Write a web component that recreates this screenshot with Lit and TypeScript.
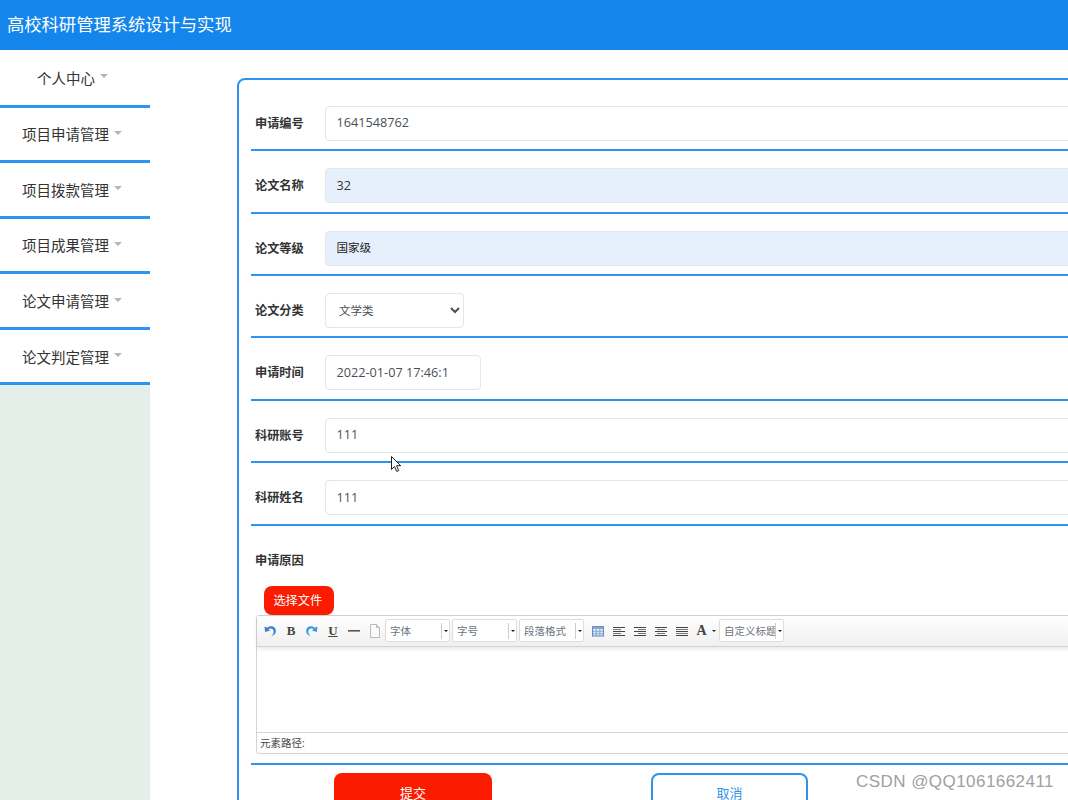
import { LitElement, html, css, svg, unsafeCSS } from "lit";
import { customElement } from "lit/decorators.js";

const FONT = unsafeCSS(`"Open Sans", "Noto Sans CJK SC", sans-serif`);
const menu = ["个人中心", "项目申请管理", "项目拨款管理", "项目成果管理", "论文申请管理", "论文判定管理"];

type Field = { label: string; value: string; kind?: "fill" | "date" | "select" | "small" };
const fields: Field[] = [
  { label: "申请编号", value: "1641548762" },
  { label: "论文名称", value: "32", kind: "fill" },
  { label: "论文等级", value: "国家级", kind: "small" },
  { label: "论文分类", value: "文学类", kind: "select" },
  { label: "申请时间", value: "2022-01-07 17:46:1", kind: "date" },
  { label: "科研账号", value: "111" },
  { label: "科研姓名", value: "111" },
];

const icon = (w: number, body: unknown) => html`<svg class="ico" width=${w} height="14" viewBox="0 0 ${w} 14">${body}</svg>`;
const undo = icon(14, svg`<path d="M1.500 2.500l.6 5.600 5.200-1.600-2-1.300C7.500 4 10 4.600 10.600 7c.4 2-.6 3.600-2.400 5 3-.6 5-2.800 4.600-5.800C12.300 2.600 8 1 4.300 3.800z" fill="#3b7fc4"/>`);
const redo = icon(14, svg`<path d="M12.500 2.500l-.6 5.600-5.200-1.600 2-1.300C6.500 4 4 4.600 3.400 7c-.4 2 .6 3.600 2.400 5-3-.6-5-2.800-4.600-5.800C1.700 2.600 6 1 9.700 3.800z" fill="#3b9ae0"/>`);
const rule = icon(14, svg`<rect x="1" y="6" width="12" height="1.600" fill="#555"/>`);
const page = icon(14, svg`<path d="M2.500 .5h6l3 3v10h-9z" fill="#fafafa" stroke="#bbb"/><path d="M8.500 .5v3h3" fill="#ddd" stroke="#bbb"/>`);
const table = icon(14, svg`<rect x="1.500" y="2.500" width="11" height="9.500" fill="#dce8f5" stroke="#5c85b8"/><rect x="1.500" y="2.500" width="11" height="2.400" fill="#7fa3cf"/><path d="M1.500 7.300h11M1.500 9.700h11M5.200 5v7M8.800 5v7" stroke="#7d9cc4" stroke-width=".8"/>`);
const align = (lines: [number, number][]) =>
  icon(14, lines.map(([a, b], i) => svg`<rect x=${a} y=${3 + i * 2} width=${b - a} height="1" fill=${i % 2 ? "#777" : "#444"}/>`));
const aLeft = align([[1, 13], [1, 9], [1, 13], [1, 9], [1, 13]]);
const aRight = align([[1, 13], [5, 13], [1, 13], [5, 13], [1, 13]]);
const aCenter = align([[1, 13], [3, 11], [1, 13], [3, 11], [1, 13]]);
const aJustify = align([[1, 13], [1, 13], [1, 13], [1, 13], [1, 13]]);

@customElement("app-root")
export class AppRoot extends LitElement {
  static styles = css`
    :host { display: block; height: 800px; overflow: hidden; position: relative; background: #fff; font-family: ${FONT}; color: #333; }
    * { box-sizing: border-box; }
    .header { height: 50px; background: #1385eb; color: #fff; font-size: 17.3px; line-height: 50px; padding-left: 7px; white-space: nowrap; }
    .body { display: flex; height: 750px; }
    .side { width: 150px; flex: none; background: #e5efea; }
    .mitem { height: 55.6px; background: #fff; border-bottom: 3px solid #2e93ee; display: flex; align-items: center; padding: 0 0 0 22px; font-size: 14.5px; color: #333; }
    .mitem:first-child { height: 57.5px; padding: 0 0 0 37px; }
    .caret { display: inline-block; margin: -2px 0 0 5px; border: 4px solid transparent; border-top-color: #b5b5b5; border-bottom: 0; }
    .main { flex: none; padding: 28px 0 0 87px; }
    .card { width: 1000px; height: 800px; border: 2px solid #2e93ee; border-radius: 8px; padding: 8.8px 0 0 12px; }
    .row { height: 62.4px; border-bottom: 2px solid #2e93ee; padding-top: 17px; display: flex; align-items: flex-start; }
    .label { width: 74px; flex: none; padding-left: 4px; height: 35px; line-height: 35px; font-size: 12.2px; font-weight: 700; color: #333; }
    .ctl { height: 35px; width: 760px; border: 1px solid #e3e6ea; border-radius: 4px; padding: 0 10px 2px 10.5px; font: 12.7px ${FONT}; color: #495057; background: #fff; outline: none; }
    .ctl.fill { background: #e6effc; color: #333; }
    .ctl.small { background: #e6effc; color: #222; font-size: 11.5px; }
    .ctl.date { width: 156px; }
    .ctl.select { width: 138.5px; padding: 0 5px 0 9px; font-size: 11.5px; color: #495057; }
    .editorRow { height: 239.5px; border-bottom: 2px solid #2e93ee; display: flex; flex-direction: column; align-items: flex-start; }
    .reason { height: 60px; padding: 25px 0 0 4px; line-height: 20px; font-size: 12.2px; font-weight: 700; }
    .upload { margin-left: 13px; height: 29px; width: 69.5px; background: #fb1c00; color: #fff; border-radius: 8px; font-size: 12.2px; text-align: center; line-height: 29px; padding-right: 2px; }
    .editor { margin-left: 5px; width: 900px; height: 139px; border: 1px solid #d4d4d4; border-radius: 3px; display: flex; flex-direction: column; }
    .toolbar { height: 31px; flex: none; display: flex; align-items: center; padding-left: 6px; background: linear-gradient(#fff, #f0f0f0); border-bottom: 1px solid #d4d4d4; box-shadow: 0 2px 4px rgba(0,0,0,.1); gap: 7px; }
    .ico { flex: none; display: block; }
    .tool { font: 700 13px "Liberation Serif", serif; color: #444; width: 14px; text-align: center; flex: none; }
    .tool.u { text-decoration: underline; }
    .tool.a { font-size: 14px; width: 11px; margin-left: 0; }
    .combo { flex: none; width: 65px; height: 23px; background: #fff; border: 1px solid #ddd; border-radius: 2px; display: flex; align-items: center; font-size: 10.5px; color: #6b7480; padding-left: 4px; white-space: nowrap; overflow: hidden; }
    .combo span { flex: 1; overflow: hidden; }
    .combos { display: flex; gap: 2px; margin-left: -4px; }
    .arrow { flex: none; width: 8px; height: 16px; border-left: 1px solid #ccc; display: flex; align-items: center; justify-content: center; }
    .arrow::after, .mini::after { content: ""; border: 2.5px solid transparent; border-top-color: #222; border-bottom: 0; }
    .mini { flex: none; margin-left: -2px; display: flex; }
    .area { flex: 1; }
    .status { height: 21px; flex: none; border-top: 1px solid #d4d4d4; font-size: 10.5px; line-height: 21px; padding-left: 3px; color: #444; }
    .actions { display: flex; padding: 8px 0 0 83px; }
    .btn { height: 60px; width: 158px; border-radius: 8px; font-size: 13px; text-align: center; padding-top: 14px; line-height: 12px; }
    .btn.ok { background: #fb1c00; color: #fff; }
    .btn.no { margin-left: 159px; width: 157px; border: 2px solid #2e93ee; color: #2e93ee; padding-top: 12px; }
    .mark { position: absolute; left: 856px; top: 772px; font: 17px "Liberation Sans", sans-serif; letter-spacing: .45px; color: #a0a0a0; white-space: nowrap; }
    .cursor { position: absolute; left: 391px; top: 456px; }
  `;

  private combo(text: string) {
    return html`<div class="combo"><span>${text}</span><div class="arrow"></div></div>`;
  }

  render() {
    return html`
      <div class="header">高校科研管理系统设计与实现</div>
      <div class="body">
        <nav class="side">
          ${menu.map((m) => html`<div class="mitem">${m}<i class="caret"></i></div>`)}
        </nav>
        <main class="main">
          <div class="card">
            ${fields.map((f) => html`
              <div class="row">
                <div class="label">${f.label}</div>
                ${f.kind === "select"
                  ? html`<select class="ctl select"><option>${f.value}</option></select>`
                  : html`<input class="ctl ${f.kind ?? ""}" .value=${f.value} />`}
              </div>`)}
            <div class="editorRow">
              <div class="reason">申请原因</div>
              <div class="upload">选择文件</div>
              <div class="editor">
                <div class="toolbar">
                  ${undo}<span class="tool">B</span>${redo}<span class="tool u">U</span>${rule}${page}
                  <div class="combos">${this.combo("字体")}${this.combo("字号")}${this.combo("段落格式")}</div>
                  ${table}${aLeft}${aRight}${aCenter}${aJustify}
                  <span class="tool a">A</span><i class="mini"></i>
                  <div class="combos">${this.combo("自定义标题")}</div>
                </div>
                <div class="area"></div>
                <div class="status">元素路径:</div>
              </div>
            </div>
            <div class="actions">
              <div class="btn ok">提交</div>
              <div class="btn no">取消</div>
            </div>
          </div>
        </main>
      </div>
      <div class="mark">CSDN @QQ1061662411</div>
      <svg class="cursor" width="12" height="18" viewBox="0 0 12 18"><path d="M.5.5v13l3-3 2.200 5 2-1-2.200-4.800h4.200z" fill="#fff" stroke="#222" stroke-width="1"/></svg>
    `;
  }
}
